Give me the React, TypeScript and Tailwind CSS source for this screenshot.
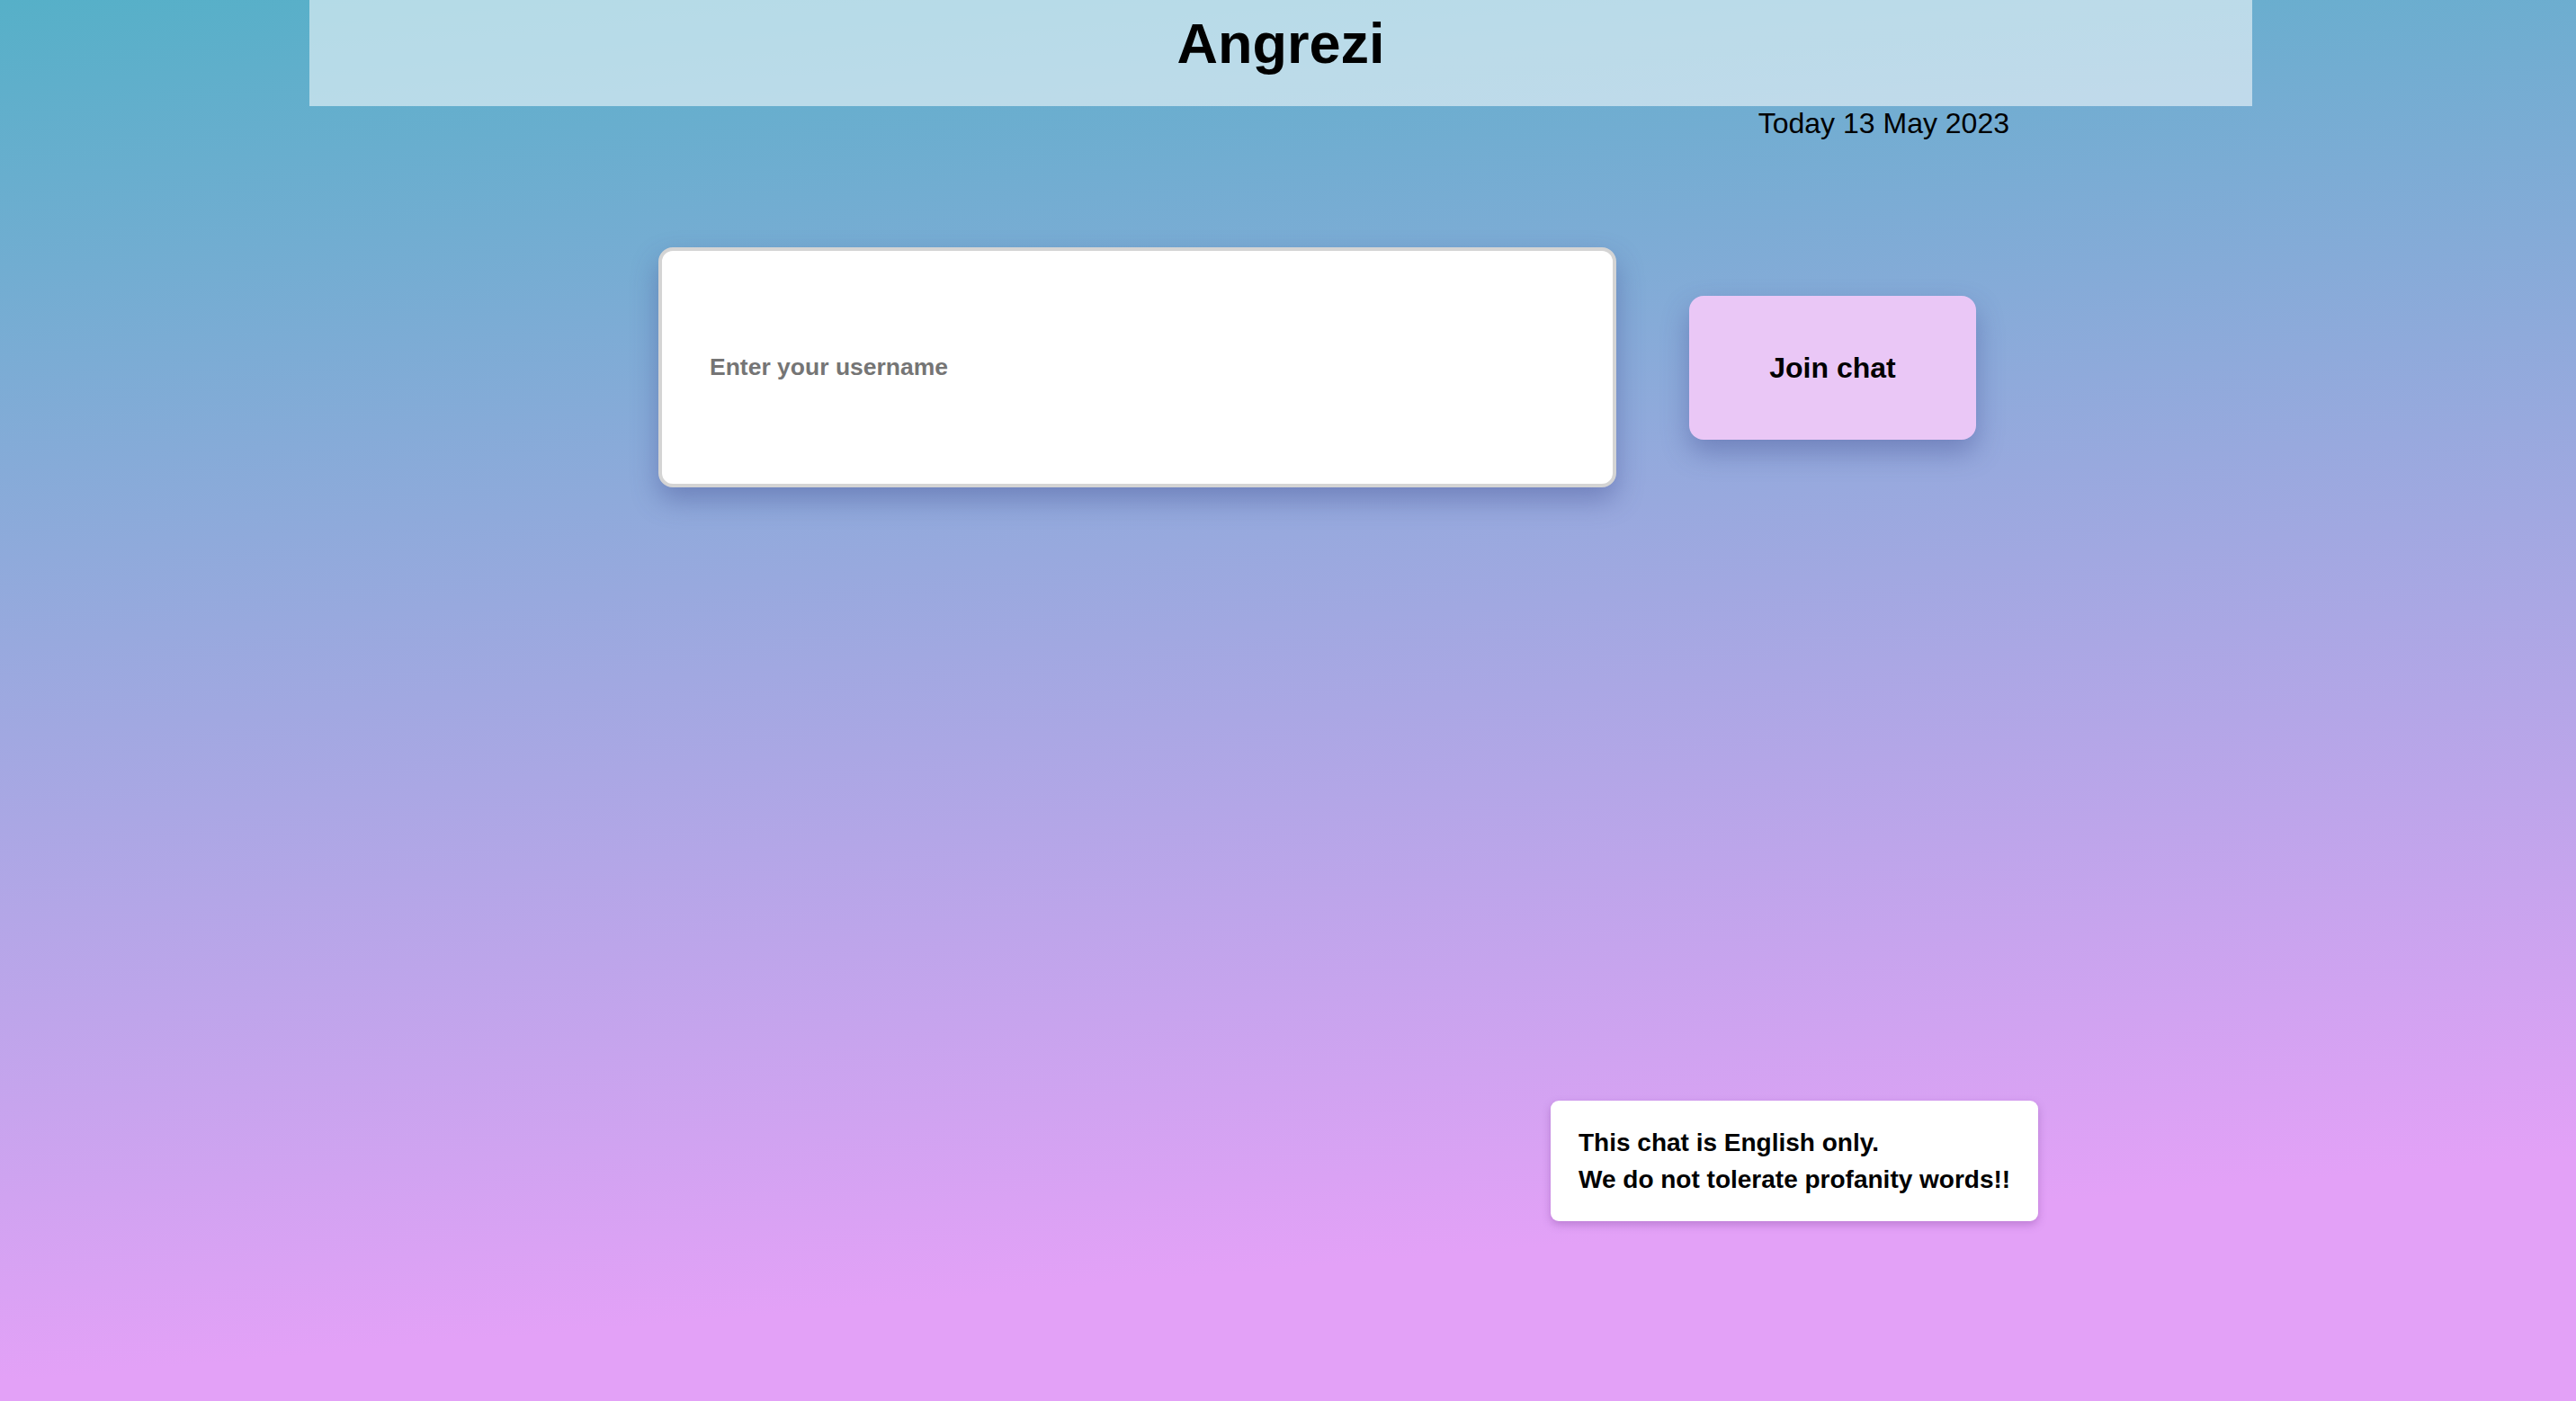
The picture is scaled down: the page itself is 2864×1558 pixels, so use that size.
export default function App() {
  return (
    <main
      className="min-h-screen w-full bg-[linear-gradient(175deg,#56b0c8_0%,#e3a1f7_85%)] text-black"
      style={{ fontFamily: '"Liberation Sans", Arial, sans-serif' }}
    >
      <div className="ml-[344px] w-[2160px]">
        <header className="h-[118px] bg-white/55 pt-[13px] text-center">
          <h1 className="text-[63px] font-bold leading-[71px]">Angrezi</h1>
        </header>

        <div className="flex justify-end pr-[270px]">
          <p className="text-[32px] leading-[38px]">Today 13 May 2023</p>
        </div>

        <div className="mt-[119px] flex items-center gap-[81px] pl-[388px]">
          <input
            type="text"
            placeholder="Enter your username"
            className="h-[267px] w-[1065px] rounded-[16px] border-[4px] border-[#d4d4d4] bg-white px-[53px] text-[26.5px] font-bold text-black shadow-[0_14px_30px_rgba(60,70,140,0.4)] outline-none placeholder:text-[#757575]"
          />
          <button
            type="button"
            className="h-[160px] w-[319px] rounded-[16px] bg-[#eac7f6] text-[32px] font-bold shadow-[0_14px_30px_rgba(60,70,140,0.4)]"
          >
            Join chat
          </button>
        </div>

        <div className="ml-[1380px] mt-[682px] w-fit rounded-[9px] bg-white px-[31px] py-[26px] text-[28px] font-bold leading-[41px] shadow-[0_4px_10px_rgba(120,60,150,0.35)]">
          <p>This chat is English only.</p>
          <p>We do not tolerate profanity words!!</p>
        </div>
      </div>
    </main>
  );
}
